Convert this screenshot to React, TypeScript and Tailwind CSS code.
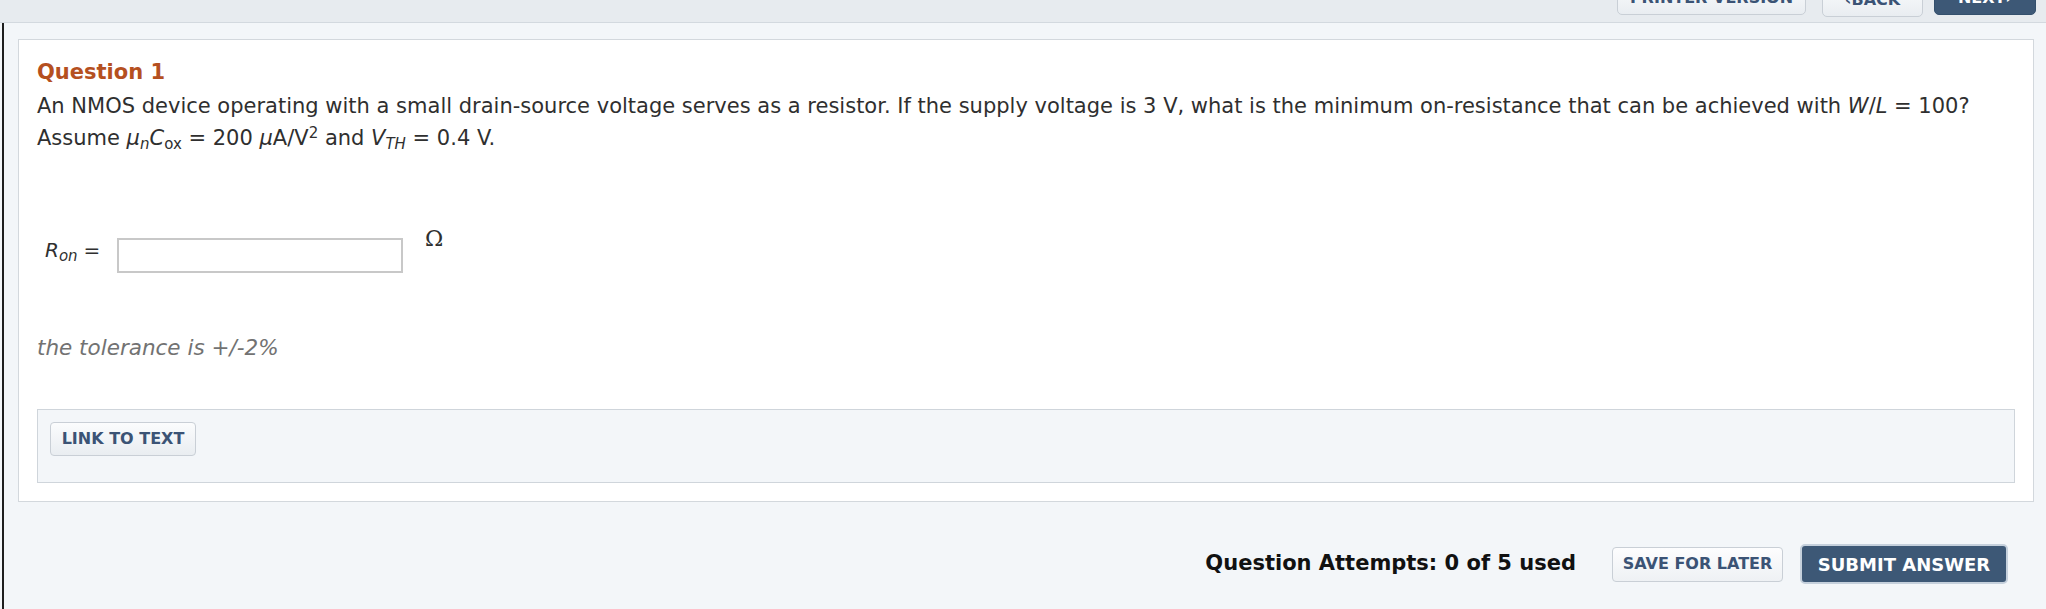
import React from 'react';

function TopButton({ label, dark }: { label: string; dark?: boolean }) {
  return (
    <div
      className={`h-[34px] mt-[-19px] flex items-center justify-center whitespace-nowrap rounded-[5px] border text-[16px] font-bold ${
        dark
          ? 'bg-[#3d5876] border-[#34506d] text-white'
          : 'bg-gradient-to-b from-[#fbfcfd] to-[#e9edf1] border-[#c9cfd6] text-[#3b5375]'
      }`}
    >
      {label}
    </div>
  );
}

function App() {
  return (
    <div className="w-[2046px] h-[609px] overflow-hidden bg-[#f3f6f9] font-['DejaVu_Sans',sans-serif] text-[#2f2f2f]">
      {/* top toolbar, mostly scrolled off */}
      <div className="h-[23px] bg-[#e7ebef] border-b border-[#d3d9df] flex justify-end items-start pr-[10px] overflow-hidden">
        <div className="w-[189px] mr-[16px]">
          <TopButton label="PRINTER VERSION" />
        </div>
        <div className="w-[101px] mr-[11px] mt-[2px]">
          <TopButton label="‹BACK" />
        </div>
        <div className="w-[102px]">
          <TopButton label="NEXT›" dark />
        </div>
      </div>

      <div className="flex h-[586px]">
        <div className="w-[2px] ml-[2px] bg-[#1e1e1e]" />
        <div className="flex-1 pl-[14px] pr-[12px] pt-[16px]">
          {/* question card */}
          <div className="bg-white border border-[#d3d8dd] px-[18px] pt-[19px] pb-[18px]">
            <h2 className="text-[21px] leading-[26px] font-bold text-[#b5501f]">Question 1</h2>
            <p className="mt-[5px] text-[21px] leading-[32px] whitespace-nowrap">
              An NMOS device operating with a small drain-source voltage serves as a resistor. If the supply voltage is 3 V,
              what is the minimum on-resistance that can be achieved with <i>W</i>/<i>L</i> = 100?
              <br />
              Assume <i>μ</i>
              <sub className="italic text-[15px]">n</sub>
              <i>C</i>
              <sub className="text-[15px]">ox</sub> = 200 <i>μ</i>A/V<sup className="text-[15px]">2</sup> and <i>V</i>
              <sub className="italic text-[15px]">TH</sub> = 0.4 V.
            </p>

            <div className="mt-[74px] flex items-start h-[45px]">
              <div className="w-[80px] pl-[8px] pt-[10px] text-[20px] leading-[24px]">
                <i>R</i>
                <sub className="italic text-[15px]">on</sub>
                <span className="ml-[6px]">=</span>
              </div>
              <div className="mt-[10px] w-[286px] h-[35px] border-2 border-[#c8c8c8] bg-white" />
              <div className="ml-[22px] text-[22px] leading-[22px] font-['DejaVu_Serif',serif]">Ω</div>
            </div>

            <p className="mt-[63px] text-[21.5px] leading-[24px] italic text-[#727272]">the tolerance is +/-2%</p>

            <div className="mt-[49px] h-[74px] border border-[#cfd5db] bg-[#f3f6f9] pt-[12px] pl-[12px]">
              <button className="h-[34px] w-[146px] rounded-[4px] border border-[#c9cfd6] bg-gradient-to-b from-[#fbfcfd] to-[#e9edf1] text-[16px] font-bold text-[#3b5375]">
                LINK TO TEXT
              </button>
            </div>
          </div>

          {/* footer actions */}
          <div className="mt-[42px] flex items-center justify-end pr-[26px]">
            <span className="text-[21px] font-bold text-[#111]">Question Attempts: 0 of 5 used</span>
            <button className="ml-[36px] h-[35px] w-[171px] rounded-[4px] border border-[#c9cfd6] bg-gradient-to-b from-[#fdfdfe] to-[#eef1f4] text-[16px] font-bold text-[#3b5375]">
              SAVE FOR LATER
            </button>
            <button className="ml-[17px] h-[40px] w-[208px] rounded-[5px] border-2 border-[#c5d0dc] bg-[#3d5876] text-[18px] font-bold text-white">
              SUBMIT ANSWER
            </button>
          </div>
        </div>
      </div>
    </div>
  );
}

export default App;
